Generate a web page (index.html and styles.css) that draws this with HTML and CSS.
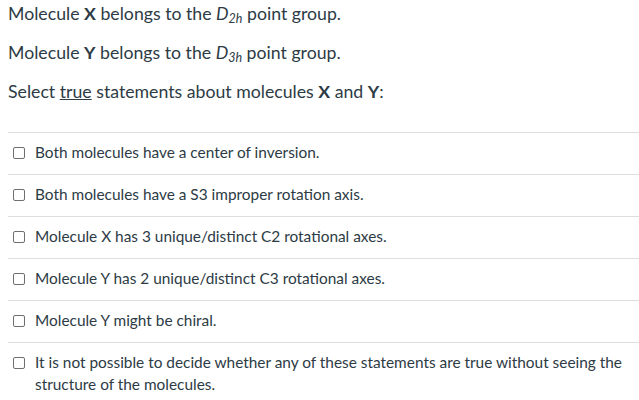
FILE: index.html
```html
<!DOCTYPE html>
<html>
<head>
<meta charset="utf-8">
<link rel="stylesheet" href="styles.css">
</head>
<body>
<div class="question">
  <p class="stem">Molecule <b>X</b> belongs to the <i>D</i><sub><i>2h</i></sub> point group.</p>
  <p class="stem">Molecule <b>Y</b> belongs to the <i>D</i><sub><i>3h</i></sub> point group.</p>
  <p class="stem">Select <u>true</u> statements about molecules <b>X</b> and <b>Y</b>:</p>
  <ul class="answers">
    <li class="answer"><span class="box"></span><span class="label">Both molecules have a center of inversion.</span></li>
    <li class="answer"><span class="box"></span><span class="label">Both molecules have a S3 improper rotation axis.</span></li>
    <li class="answer"><span class="box"></span><span class="label">Molecule X has 3 unique/distinct C2 rotational axes.</span></li>
    <li class="answer"><span class="box"></span><span class="label">Molecule Y has 2 unique/distinct C3 rotational axes.</span></li>
    <li class="answer"><span class="box"></span><span class="label">Molecule Y might be chiral.</span></li>
    <li class="answer"><span class="box"></span><span class="label">It is not possible to decide whether any of these statements are true without seeing the structure of the molecules.</span></li>
  </ul>
</div>
</body>
</html>
```
FILE: styles.css
```css
html, body {
  background: #ffffff;
}
body {
  margin: 0 0 0 8px;
  font-family: Lato, "Liberation Sans", sans-serif;
  color: #2d3b45;
}
.stem {
  margin: 0 0 14px 0;
  font-size: 17.7px;
  line-height: 25px;
}
.stem:first-child {
  margin-top: 1px;
}
.stem sub {
  font-size: 12.5px;
  vertical-align: -3px;
  line-height: 0;
}
.stem b {
  font-weight: 700;
}
.answers {
  list-style: none;
  margin: 28px 0 0 0;
  padding: 0;
}
.answer {
  display: flex;
  align-items: flex-start;
  border-top: 1px solid #dcdedf;
  padding: 8px 0 11px 5px;
  font-size: 15.4px;
  line-height: 22px;
}
.box {
  flex: none;
  box-sizing: border-box;
  width: 12px;
  height: 12px;
  border: 1.5px solid #6b6f72;
  border-radius: 2px;
  margin-top: 6px;
  margin-right: 10px;
}
.label {
  flex: 1;
  padding-right: 10px;
}
```
